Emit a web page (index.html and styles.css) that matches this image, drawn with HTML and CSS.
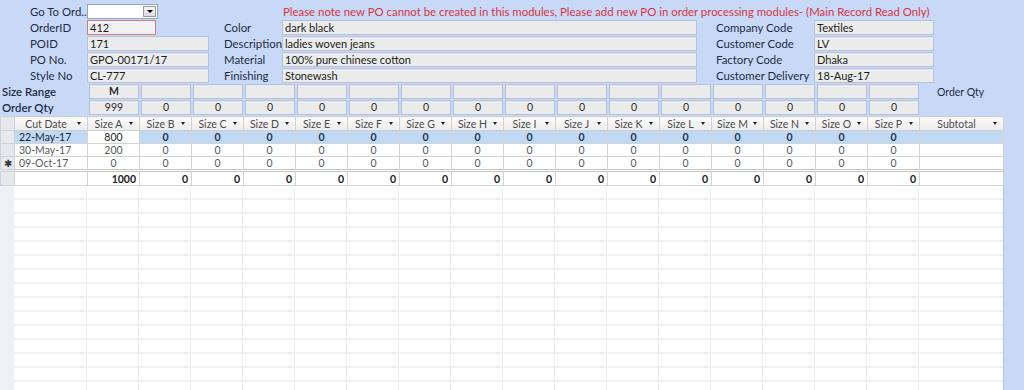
FILE: index.html
```html
<!DOCTYPE html>
<html lang="en">
<head>
  <meta charset="UTF-8" />
  <title>Cut Plan</title>
  <link rel="stylesheet" href="styles.css">
</head>
<body>
  <div class="head">
    <span class="lbl">Go To Ord..</span>
    <div class="combo"><span class="combo-btn"></span></div>
    <span></span>
    <div class="notice">Please note new PO cannot be created in this modules, Please add new PO in order processing modules- (Main Record Read Only)</div>

    <span class="lbl">OrderID</span>
    <div class="cell-wrap"><div class="field active">412</div></div>
    <span class="lbl mid">Color</span>
    <div class="field">dark black</div>
    <span class="lbl right">Company Code</span>
    <div class="field">Textiles</div>

    <span class="lbl">POID</span>
    <div class="field">171</div>
    <span class="lbl mid">Description</span>
    <div class="field">ladies woven jeans</div>
    <span class="lbl right">Customer Code</span>
    <div class="field">LV</div>

    <span class="lbl">PO No.</span>
    <div class="field">GPO-00171/17</div>
    <span class="lbl mid">Material</span>
    <div class="field">100% pure chinese cotton</div>
    <span class="lbl right">Factory Code</span>
    <div class="field">Dhaka</div>

    <span class="lbl">Style No</span>
    <div class="field">CL-777</div>
    <span class="lbl mid">Finishing</span>
    <div class="field">Stonewash</div>
    <span class="lbl right">Customer Delivery</span>
    <div class="field">18-Aug-17</div>
  </div>

  <div class="size-row">
    <span class="size-lbl">Size Range</span>
    <div class="box bold">M</div>
    <div class="box"></div><div class="box"></div><div class="box"></div><div class="box"></div><div class="box"></div>
    <div class="box"></div><div class="box"></div><div class="box"></div><div class="box"></div><div class="box"></div>
    <div class="box"></div><div class="box"></div><div class="box"></div><div class="box"></div><div class="box"></div>
    <span class="oq-lbl">Order Qty</span>
  </div>
  <div class="size-row">
    <span class="size-lbl">Order Qty</span>
    <div class="box">999</div>
    <div class="box">0</div><div class="box">0</div><div class="box">0</div><div class="box">0</div><div class="box">0</div>
    <div class="box">0</div><div class="box">0</div><div class="box">0</div><div class="box">0</div><div class="box">0</div>
    <div class="box">0</div><div class="box">0</div><div class="box">0</div><div class="box">0</div><div class="box">0</div>
  </div>

  <div class="sheet">
    <table class="grid">
      <colgroup>
        <col class="c-sel"><col class="c-date">
        <col class="c-size"><col class="c-size"><col class="c-size"><col class="c-size">
        <col class="c-size"><col class="c-size"><col class="c-size"><col class="c-size">
        <col class="c-size"><col class="c-size"><col class="c-size"><col class="c-size">
        <col class="c-size"><col class="c-size"><col class="c-size"><col class="c-size">
        <col class="c-sub">
      </colgroup>
      <thead>
        <tr>
          <th class="sel"></th>
          <th><div class="hd"><span>Cut Date</span><i></i></div></th>
          <th><div class="hd"><span>Size A</span><i></i></div></th>
          <th><div class="hd"><span>Size B</span><i></i></div></th>
          <th><div class="hd"><span>Size C</span><i></i></div></th>
          <th><div class="hd"><span>Size D</span><i></i></div></th>
          <th><div class="hd"><span>Size E</span><i></i></div></th>
          <th><div class="hd"><span>Size F</span><i></i></div></th>
          <th><div class="hd"><span>Size G</span><i></i></div></th>
          <th><div class="hd"><span>Size H</span><i></i></div></th>
          <th><div class="hd"><span>Size I</span><i></i></div></th>
          <th><div class="hd"><span>Size J</span><i></i></div></th>
          <th><div class="hd"><span>Size K</span><i></i></div></th>
          <th><div class="hd"><span>Size L</span><i></i></div></th>
          <th><div class="hd"><span>Size M</span><i></i></div></th>
          <th><div class="hd"><span>Size N</span><i></i></div></th>
          <th><div class="hd"><span>Size O</span><i></i></div></th>
          <th><div class="hd"><span>Size P</span><i></i></div></th>
          <th><div class="hd"><span>Subtotal</span><i></i></div></th>
        </tr>
      </thead>
      <tbody>
        <tr class="current">
          <td class="sel"></td>
          <td class="date">22-May-17</td>
          <td class="focus">800</td>
          <td>0</td><td>0</td><td>0</td><td>0</td><td>0</td><td>0</td><td>0</td><td>0</td>
          <td>0</td><td>0</td><td>0</td><td>0</td><td>0</td><td>0</td><td>0</td>
          <td></td>
        </tr>
        <tr>
          <td class="sel"></td>
          <td class="date">30-May-17</td>
          <td>200</td>
          <td>0</td><td>0</td><td>0</td><td>0</td><td>0</td><td>0</td><td>0</td><td>0</td>
          <td>0</td><td>0</td><td>0</td><td>0</td><td>0</td><td>0</td><td>0</td>
          <td></td>
        </tr>
        <tr>
          <td class="sel new">&#10033;</td>
          <td class="date">09-Oct-17</td>
          <td>0</td>
          <td>0</td><td>0</td><td>0</td><td>0</td><td>0</td><td>0</td><td>0</td><td>0</td>
          <td>0</td><td>0</td><td>0</td><td>0</td><td>0</td><td>0</td><td>0</td>
          <td></td>
        </tr>
        <tr class="total">
          <td class="sel"></td>
          <td></td>
          <td>1000</td>
          <td>0</td><td>0</td><td>0</td><td>0</td><td>0</td><td>0</td><td>0</td><td>0</td>
          <td>0</td><td>0</td><td>0</td><td>0</td><td>0</td><td>0</td><td>0</td>
          <td></td>
        </tr>
      </tbody>
    </table>
    <div class="blank"></div>
  </div>
</body>
</html>
```

FILE: styles.css
```css
:root {
  --bg: #c7d9f7;
  --label: #1f2b45;
  --field: #ebebeb;
  --field-border: #b3c3dc;
  --notice: #d8363f;
  --grid-line: #d4d4d4;
  --faint: #efefef;
  --font: 'Lato', 'Liberation Sans', sans-serif;
}

body {
  margin: 0;
  background-color: var(--bg);
  font-family: var(--font);
  font-size: 11.4px;
  color: var(--label);
  height: 390px;
  overflow: hidden;
}

/* header fields */
.head {
  display: grid;
  grid-template-columns: 87px 122px 73px 415px 117px 120px;
  grid-template-rows: 16px repeat(4, 15px);
  row-gap: 1px;
  padding-top: 3px;
  align-items: center;
}

.lbl {
  padding-left: 30px;
  line-height: 15px;
  white-space: nowrap;
}

.lbl.mid {
  padding-left: 15px;
}

.lbl.right {
  padding-left: 19px;
}

.field {
  height: 13px;
  line-height: 13px;
  background-color: var(--field);
  border: 1px solid var(--field-border);
  padding-left: 2px;
  font-size: 11px;
  color: #1c1c1c;
  white-space: nowrap;
  overflow: hidden;
}

.field.active {
  width: 65px;
  background-color: #f2f1f1;
  border-color: #d27a8c;
}

.combo {
  width: 69px;
  height: 13px;
  background: #fff;
  border: 1px solid #8ea6c4;
  display: flex;
  justify-content: flex-end;
}

.combo-btn {
  width: 13px;
  height: 11px;
  margin: 1px;
  background: linear-gradient(#f6f6f6, #dcdcdc);
  border: 1px solid #9a9a9a;
  box-sizing: border-box;
  display: flex;
  align-items: center;
  justify-content: center;
}

.combo-btn::after {
  content: "";
  border-left: 3px solid transparent;
  border-right: 3px solid transparent;
  border-top: 3px solid #000;
}

.notice {
  grid-column: 4 / span 3;
  color: var(--notice);
  white-space: nowrap;
  padding-left: 1px;
}

/* size range / order qty */
.size-row {
  display: flex;
  align-items: center;
  gap: 2px;
  height: 15px;
  margin-top: 1px;
}

.size-row:first-of-type {
  margin-top: 3px;
}

.size-lbl {
  width: 85px;
  padding-left: 2px;
  font-weight: 600;
}

.box {
  width: 48px;
  height: 13px;
  line-height: 13px;
  background-color: var(--field);
  border: 1px solid var(--field-border);
  text-align: center;
  font-size: 10.5px;
  color: #2b2b2b;
}

.box.bold {
  font-weight: 700;
}

.oq-lbl {
  margin-left: 16px;
  font-size: 10.5px;
}

/* datasheet */
.sheet {
  margin-top: 1px;
  width: 1003px;
  background: #fff;
  border-right: 1px solid #b9c3d2;
}

.grid {
  width: 1003px;
  table-layout: fixed;
  border-collapse: collapse;
  font-size: 10.5px;
}

.c-sel { width: 14px; }
.c-date { width: 73px; }
.c-size { width: 52px; }
.c-sub { width: 84px; }

.grid th {
  height: 13px;
  padding: 0;
  font-weight: normal;
  color: #4b4b4b;
  background: linear-gradient(#fbfbfb, #ececec);
  border: 1px solid #cfcfcf;
}

.hd {
  display: flex;
  align-items: center;
}

.hd span {
  flex: 1;
  text-align: center;
}

.hd i {
  width: 0;
  height: 0;
  margin-right: 6px;
  border-left: 2px solid transparent;
  border-right: 2px solid transparent;
  border-top: 3px solid #222;
}

.grid td {
  height: 12px;
  line-height: 12px;
  padding: 0 3px;
  text-align: center;
  color: #5a5a5a;
  border: 1px solid var(--grid-line);
  white-space: nowrap;
}

.grid .sel {
  background: #e6e8ed;
  border-color: #cdd1d8;
  padding: 0;
}

.grid td.new {
  color: #333;
  font-size: 10px;
}

.grid td.date {
  text-align: left;
  padding-left: 4px;
}

.current td {
  background: #bfd8f3;
  color: #1c3551;
  font-weight: 700;
}

.current td.date {
  font-weight: normal;
  color: #1b2635;
}

.current td.focus {
  background: #fff;
  font-weight: normal;
  color: #222;
}

.total td {
  border-top: 3px double #c4c4c4;
  text-align: right;
  font-weight: 700;
  color: #222;
  height: 13px;
}

.blank {
  height: 210px;
  background:
    linear-gradient(#eef0f5, #eef0f5) 0 0 / 14px 100% no-repeat,
    repeating-linear-gradient(to right, #f0f0f0 0 1px, transparent 1px 52px) 86px 0 / 834px 100% no-repeat,
    repeating-linear-gradient(to bottom, transparent 0 12px, #f1f1f1 12px 14px);
}
```
